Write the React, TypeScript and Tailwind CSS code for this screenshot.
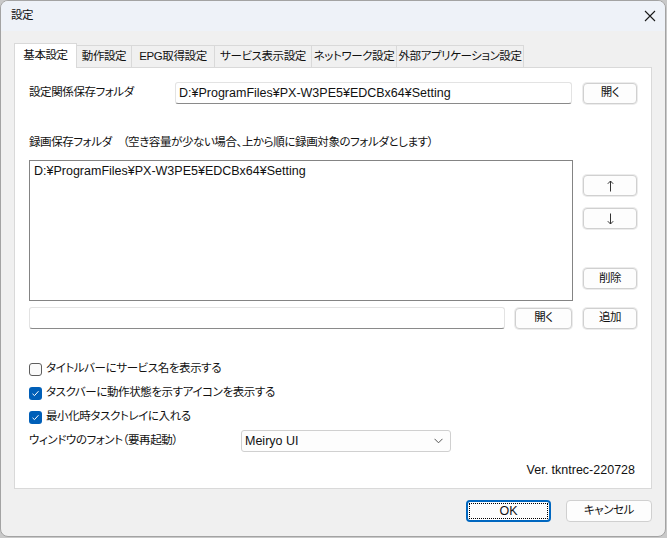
import React from "react"

const font = "font-['Liberation_Sans','Noto_Sans_CJK_JP',sans-serif] [font-feature-settings:'palt']"
// Japanese text is set a bit smaller and tighter so its widths follow the narrow UI font of the reference
const jp = "text-[11.5px] tracking-[-0.4px]"
const en = "text-[12.5px] tracking-normal"

const tabs = [
  { label: "基本設定", w: "w-[63px]", active: true },
  { label: "動作設定", w: "w-[56px]" },
  { label: "EPG取得設定", w: "w-[84px]" },
  { label: "サービス表示設定", w: "w-[98px]" },
  { label: "ネットワーク設定", w: "w-[86px]" },
  { label: "外部アプリケーション設定", w: "w-[128px]" },
]

function Btn({ children, className = "" }: { children: React.ReactNode; className?: string }) {
  return (
    <div
      className={`flex h-[21px] items-center justify-center rounded-[4px] border border-[#d0d0d0] bg-[#fdfdfd] text-[#111] shadow-[0_0_0_1px_#ececec] ${jp} ${className}`}
    >
      {children}
    </div>
  )
}

function TextBox({ value, className = "" }: { value?: string; className?: string }) {
  return (
    <div
      className={`flex h-[22px] items-center rounded-[3px] border border-[#e3e3e3] border-b-[#8a8a8a] bg-white px-[3px] text-[#111] ${en} ${className}`}
    >
      {value}
    </div>
  )
}

function Check({ checked, label }: { checked?: boolean; label: string }) {
  return (
    <div className="flex h-[24px] items-center gap-[4px]">
      {checked ? (
        <div className="flex h-[13px] w-[13px] items-center justify-center rounded-[3px] bg-[#005fb8]">
          <svg width="9" height="9" viewBox="0 0 9 9" fill="none">
            <path d="M1.5 4.8 L3.5 6.6 L7.5 2.2" stroke="#fff" strokeWidth="1" />
          </svg>
        </div>
      ) : (
        <div className="h-[13px] w-[13px] rounded-[3px] border border-[#5d5d5d] bg-[#fafafa]" />
      )}
      <span className={`text-[#111] ${jp}`}>{label}</span>
    </div>
  )
}

function Arrow({ down }: { down?: boolean }) {
  return (
    <svg width="7" height="12" viewBox="0 0 7 12" fill="none" className={down ? "rotate-180" : ""}>
      <path d="M3.5 1 V11.5 M0.8 3.8 L3.5 1 L6.2 3.8" stroke="#333" strokeWidth="1" />
    </svg>
  )
}

export default function App() {
  return (
    <div className={`h-[538px] w-[667px] bg-[#c9c9c9] ${font}`}>
      <div className="flex h-[537px] w-[666px] flex-col overflow-hidden rounded-[8px] border border-[#a3a3a3] bg-[#f0f0f0]">
        {/* title bar */}
        <div className="flex h-[30px] shrink-0 items-center justify-between bg-[#eef2f8] pl-[10px] pr-[8px]">
          <span className={`text-[#111] ${jp}`}>設定</span>
          <svg width="12" height="12" viewBox="0 0 12 12" className="mr-[1px]">
            <path d="M1 1 L11 11 M11 1 L1 11" stroke="#1a1a1a" strokeWidth="1.1" />
          </svg>
        </div>

        <div className="px-[13px] pt-[12px]">
          {/* tabs */}
          <div className="flex h-[24px] items-end">
            {tabs.map((t) =>
              t.active ? (
                <div
                  key={t.label}
                  className={`${t.w} relative z-10 -mb-px flex h-[25px] items-center justify-center whitespace-nowrap border border-b-0 border-[#d9d9d9] bg-white text-[#111] ${jp}`}
                >
                  {t.label}
                </div>
              ) : (
                <div
                  key={t.label}
                  className={`${t.w} -ml-px flex h-[22px] items-center justify-center whitespace-nowrap border border-b-0 border-[#d9d9d9] bg-[#f0f0f0] text-[#111] ${jp}`}
                >
                  {t.label}
                </div>
              )
            )}
          </div>

          {/* panel */}
          <div className={`flex h-[422px] flex-col border border-[#d9d9d9] bg-white px-[14px] pt-[14px] text-[#111] ${jp}`}>
            <div className="flex items-center">
              <span className="w-[146px]">設定関係保存フォルダ</span>
              <TextBox value="D:¥ProgramFiles¥PX-W3PE5¥EDCBx64¥Setting" className="w-[397px]" />
              <Btn className="ml-[11px] w-[54px]">開く</Btn>
            </div>

            <div className="mt-[30px] h-[16px] leading-[16px]">
              録画保存フォルダ　（空き容量が少ない場合、上から順に録画対象のフォルダとします）
            </div>

            <div className="mt-[10px] flex">
              <div className={`h-[141px] w-[544px] border border-[#848484] px-[4px] pt-[1px] ${en}`}>
                D:¥ProgramFiles¥PX-W3PE5¥EDCBx64¥Setting
              </div>
              <div className="ml-[10px] flex flex-col pt-[15px]">
                <Btn className="w-[54px]">
                  <Arrow />
                </Btn>
                <Btn className="mt-[12px] w-[54px]">
                  <Arrow down />
                </Btn>
                <Btn className="mt-[39px] w-[54px]">削除</Btn>
              </div>
            </div>

            <div className="mt-[6px] flex items-center">
              <TextBox className="w-[476px]" />
              <Btn className="ml-[10px] w-[57px]">開く</Btn>
              <Btn className="ml-[11px] w-[54px]">追加</Btn>
            </div>

            <div className="mt-[28px] flex flex-col">
              <Check label="タイトルバーにサービス名を表示する" />
              <Check checked label="タスクバーに動作状態を示すアイコンを表示する" />
              <Check checked label="最小化時タスクトレイに入れる" />
            </div>

            <div className="mt-[1px] flex items-center">
              <span className="w-[212px]">ウィンドウのフォント（要再起動）</span>
              <div className={`flex h-[22px] w-[210px] items-center justify-between rounded-[3px] border border-[#d0d0d0] bg-[#fdfdfd] pl-[3px] pr-[7px] ${en}`}>
                <span>Meiryo UI</span>
                <svg width="9" height="6" viewBox="0 0 9 6" fill="none">
                  <path d="M0.5 0.8 L4.5 4.8 L8.5 0.8" stroke="#555" strokeWidth="1" />
                </svg>
              </div>
            </div>

            <div className={`mt-[9px] pr-[2px] text-right ${en}`}>Ver. tkntrec-220728</div>
          </div>
        </div>

        {/* footer */}
        <div className="flex justify-end gap-[15px] pr-[13px] pt-[11px]">
          <div className="flex h-[22px] w-[85px] rounded-[4px] border-2 border-[#0067c0] bg-[#fdfdfd] p-px">
            <div className={`flex flex-1 items-center justify-center border border-dotted border-black text-[#111] ${en}`}>
              OK
            </div>
          </div>
          <div className={`flex h-[22px] w-[86px] items-center justify-center rounded-[4px] border border-[#d0d0d0] bg-[#fdfdfd] text-[#111] ${jp}`}>
            キャンセル
          </div>
        </div>
      </div>
    </div>
  )
}
